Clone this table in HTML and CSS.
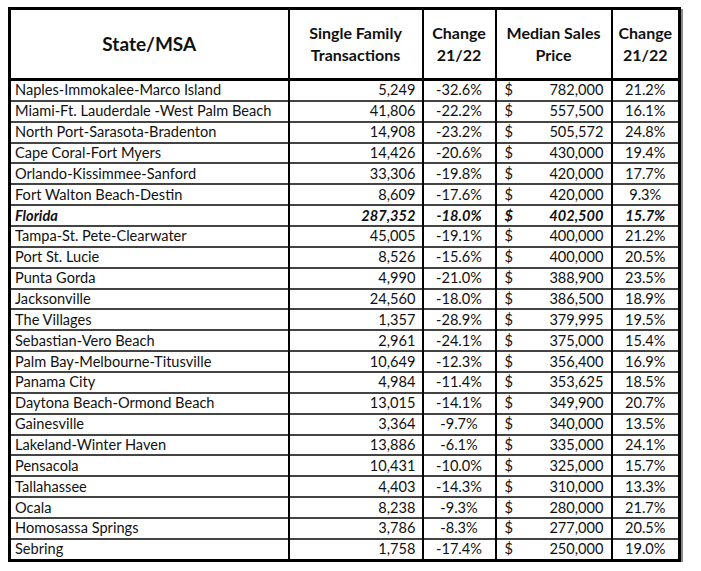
FILE: index.html
```html
<!DOCTYPE html>
<html>
<head>
<meta charset="utf-8">
<link rel="stylesheet" href="styles.css">
</head>
<body>
<table class="tbl">
<colgroup>
<col class="c1"><col class="c2"><col class="c3"><col class="c4"><col class="c5">
</colgroup>
<thead>
<tr class="head">
<th class="h-state">State/MSA</th>
<th>Single Family<br>Transactions</th>
<th>Change<br>21/22</th>
<th>Median Sales<br>Price</th>
<th>Change<br>21/22</th>
</tr>
</thead>
<tbody>
<tr><td class="name">Naples-Immokalee-Marco Island</td><td class="num">5,249</td><td class="ctr">-32.6%</td><td class="price"><span class="cur">$</span><span>782,000</span></td><td class="ctr">21.2%</td></tr>
<tr><td class="name">Miami-Ft. Lauderdale -West Palm Beach</td><td class="num">41,806</td><td class="ctr">-22.2%</td><td class="price"><span class="cur">$</span><span>557,500</span></td><td class="ctr">16.1%</td></tr>
<tr><td class="name">North Port-Sarasota-Bradenton</td><td class="num">14,908</td><td class="ctr">-23.2%</td><td class="price"><span class="cur">$</span><span>505,572</span></td><td class="ctr">24.8%</td></tr>
<tr><td class="name">Cape Coral-Fort Myers</td><td class="num">14,426</td><td class="ctr">-20.6%</td><td class="price"><span class="cur">$</span><span>430,000</span></td><td class="ctr">19.4%</td></tr>
<tr><td class="name">Orlando-Kissimmee-Sanford</td><td class="num">33,306</td><td class="ctr">-19.8%</td><td class="price"><span class="cur">$</span><span>420,000</span></td><td class="ctr">17.7%</td></tr>
<tr><td class="name">Fort Walton Beach-Destin</td><td class="num">8,609</td><td class="ctr">-17.6%</td><td class="price"><span class="cur">$</span><span>420,000</span></td><td class="ctr">9.3%</td></tr>
<tr class="state"><td class="name">Florida</td><td class="num">287,352</td><td class="ctr">-18.0%</td><td class="price"><span class="cur">$</span><span>402,500</span></td><td class="ctr">15.7%</td></tr>
<tr><td class="name">Tampa-St. Pete-Clearwater</td><td class="num">45,005</td><td class="ctr">-19.1%</td><td class="price"><span class="cur">$</span><span>400,000</span></td><td class="ctr">21.2%</td></tr>
<tr><td class="name">Port St. Lucie</td><td class="num">8,526</td><td class="ctr">-15.6%</td><td class="price"><span class="cur">$</span><span>400,000</span></td><td class="ctr">20.5%</td></tr>
<tr><td class="name">Punta Gorda</td><td class="num">4,990</td><td class="ctr">-21.0%</td><td class="price"><span class="cur">$</span><span>388,900</span></td><td class="ctr">23.5%</td></tr>
<tr><td class="name">Jacksonville</td><td class="num">24,560</td><td class="ctr">-18.0%</td><td class="price"><span class="cur">$</span><span>386,500</span></td><td class="ctr">18.9%</td></tr>
<tr><td class="name">The Villages</td><td class="num">1,357</td><td class="ctr">-28.9%</td><td class="price"><span class="cur">$</span><span>379,995</span></td><td class="ctr">19.5%</td></tr>
<tr><td class="name">Sebastian-Vero Beach</td><td class="num">2,961</td><td class="ctr">-24.1%</td><td class="price"><span class="cur">$</span><span>375,000</span></td><td class="ctr">15.4%</td></tr>
<tr><td class="name">Palm Bay-Melbourne-Titusville</td><td class="num">10,649</td><td class="ctr">-12.3%</td><td class="price"><span class="cur">$</span><span>356,400</span></td><td class="ctr">16.9%</td></tr>
<tr><td class="name">Panama City</td><td class="num">4,984</td><td class="ctr">-11.4%</td><td class="price"><span class="cur">$</span><span>353,625</span></td><td class="ctr">18.5%</td></tr>
<tr><td class="name">Daytona Beach-Ormond Beach</td><td class="num">13,015</td><td class="ctr">-14.1%</td><td class="price"><span class="cur">$</span><span>349,900</span></td><td class="ctr">20.7%</td></tr>
<tr><td class="name">Gainesville</td><td class="num">3,364</td><td class="ctr">-9.7%</td><td class="price"><span class="cur">$</span><span>340,000</span></td><td class="ctr">13.5%</td></tr>
<tr><td class="name">Lakeland-Winter Haven</td><td class="num">13,886</td><td class="ctr">-6.1%</td><td class="price"><span class="cur">$</span><span>335,000</span></td><td class="ctr">24.1%</td></tr>
<tr><td class="name">Pensacola</td><td class="num">10,431</td><td class="ctr">-10.0%</td><td class="price"><span class="cur">$</span><span>325,000</span></td><td class="ctr">15.7%</td></tr>
<tr><td class="name">Tallahassee</td><td class="num">4,403</td><td class="ctr">-14.3%</td><td class="price"><span class="cur">$</span><span>310,000</span></td><td class="ctr">13.3%</td></tr>
<tr><td class="name">Ocala</td><td class="num">8,238</td><td class="ctr">-9.3%</td><td class="price"><span class="cur">$</span><span>280,000</span></td><td class="ctr">21.7%</td></tr>
<tr><td class="name">Homosassa Springs</td><td class="num">3,786</td><td class="ctr">-8.3%</td><td class="price"><span class="cur">$</span><span>277,000</span></td><td class="ctr">20.5%</td></tr>
<tr><td class="name">Sebring</td><td class="num">1,758</td><td class="ctr">-17.4%</td><td class="price"><span class="cur">$</span><span>250,000</span></td><td class="ctr">19.0%</td></tr>
</tbody>
</table>
</body>
</html>
```

FILE: styles.css
```css
html, body {
  margin: 0;
  padding: 0;
  background: #ffffff;
}

body {
  padding: 7px 0 0 8px;
  font-family: "Lato", "Liberation Sans", sans-serif;
  color: #111;
}

.tbl {
  border-collapse: collapse;
  table-layout: fixed;
  width: 670px;
  border: 3px solid #000;
  box-shadow: 2px 2px 0 #8a8a8a;
}

.c1 { width: 279px; }
.c2 { width: 134px; }
.c3 { width: 73px; }
.c4 { width: 116px; }
.c5 { width: 68px; }

.head th {
  height: 68px;
  padding: 0;
  font-weight: 700;
  font-size: 16px;
  line-height: 22px;
  text-align: center;
  vertical-align: middle;
  border-left: 2px solid #000;
  border-bottom: 3px solid #000;
}

.head .h-state {
  font-size: 19px;
}

tbody td {
  height: 18.86px;
  padding: 0;
  font-size: 14.6px;
  line-height: 18px;
  border-left: 2px solid #000;
  border-top: 2px solid #444;
  white-space: nowrap;
  vertical-align: middle;
}

.name {
  padding-left: 4px;
  text-align: left;
}

.num {
  text-align: right;
  padding-right: 6px;
}

.ctr {
  text-align: center;
}

.price {
  padding-left: 8px;
  padding-right: 7px;
}

.price span:last-child {
  float: right;
}

.cur {
  float: left;
}

.state td {
  font-weight: 700;
  font-style: italic;
}
```
